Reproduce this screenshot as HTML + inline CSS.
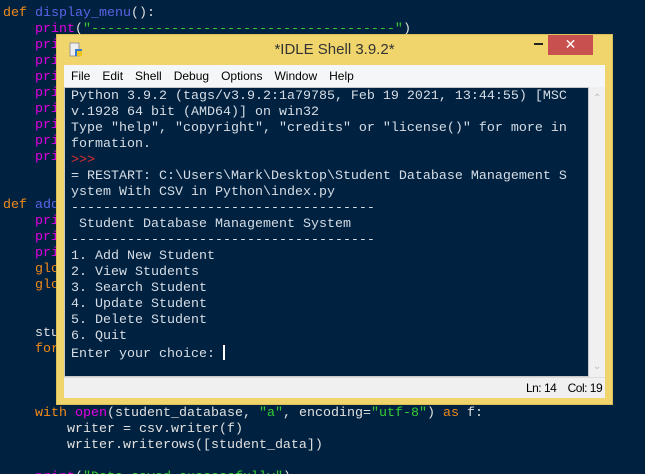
<!DOCTYPE html>
<html style="width:645px;height:474px;overflow:hidden"><head><style>
body{margin:0;width:645px;height:474px;overflow:hidden;background:#002240;position:relative;font-family:"Liberation Mono",monospace;}
.code{position:absolute;left:3px;top:6px;font-size:13.33px;line-height:16px;color:#e0e0e0;white-space:pre;}
.k{color:#f08a18}.f{color:#5b63e8}.p{color:#e200e2}.s{color:#33cc33}
#win{position:absolute;left:56px;top:34px;width:557px;height:371px;background:#efd56c;box-sizing:border-box;border:1px solid #d8bf5a;}
#title{position:absolute;left:0;right:0;top:0;height:30px;font-family:"Liberation Sans",sans-serif;font-size:15px;color:#333;text-align:center;line-height:30px;}
#close{position:absolute;left:491px;top:0;width:45px;height:20px;background:#c8514f;color:#fff;text-align:center;line-height:19px;font-size:14px;font-family:"Liberation Sans",sans-serif;}
#menu{position:absolute;left:7px;top:30px;width:541px;height:22px;background:#f5f6f7;font-family:"Liberation Sans",sans-serif;font-size:12px;line-height:22px;color:#000;}
#menu span{margin-left:7px;margin-right:5px}
#text{position:absolute;left:7px;top:52px;width:525px;height:290px;background:#002240;border:1px solid #c8c8c8;box-sizing:border-box;}
#tt{position:absolute;left:6px;top:1px;font-size:13.33px;line-height:16px;color:#d6dde6;white-space:pre;}
#sb{position:absolute;left:532px;top:52px;width:16px;height:290px;background:#f0f0f0;}
#status{position:absolute;left:7px;top:342px;width:541px;height:21px;background:#f0f0f0;font-family:"Liberation Sans",sans-serif;font-size:12px;line-height:21px;text-align:right;color:#000;border-top:1px solid #ddd;box-sizing:border-box;letter-spacing:-0.5px;}
</style></head><body>
<div class="code"><span class="k">def</span> <span class="f">display_menu</span>():
    <span class="p">print</span>(<span class="s">"--------------------------------------"</span>)
    <span class="p">print</span>
    <span class="p">print</span>
    <span class="p">print</span>
    <span class="p">print</span>
    <span class="p">print</span>
    <span class="p">print</span>
    <span class="p">print</span>
    <span class="p">print</span>


<span class="k">def</span> <span class="f">add_student</span>():
    <span class="p">print</span>
    <span class="p">print</span>
    <span class="p">print</span>
    <span class="k">global</span>
    <span class="k">global</span>


    student_data
    <span class="k">for</span>



    <span class="k">with</span> <span class="p">open</span>(student_database, <span class="s">"a"</span>, encoding=<span class="s">"utf-8"</span>) <span class="k">as</span> f:
        writer = csv.writer(f)
        writer.writerows([student_data])

    <span class="p">print</span>(<span class="s">"Data saved successfully"</span>)</div>
<div id="win">
<div id="title">*IDLE Shell 3.9.2*</div>
<svg style="position:absolute;left:11px;top:7px" width="16" height="16"><rect x="2" y="1" width="9" height="13" fill="#eee" stroke="#999"/><rect x="7" y="7" width="7" height="7" fill="#3d7cc9"/><rect x="9" y="9" width="5" height="5" fill="#f2c418"/></svg>
<div style="position:absolute;left:477px;top:8px;width:9px;height:2px;background:#222"></div>
<div style="position:absolute;left:510px;top:5px;width:11px;height:8px;border:1px solid #222;border-top-width:2px"></div>
<div id="close">✕</div>
<div id="menu"><span>File</span><span>Edit</span><span>Shell</span><span>Debug</span><span>Options</span><span>Window</span><span>Help</span></div>
<div id="text"><div id="tt">Python 3.9.2 (tags/v3.9.2:1a79785, Feb 19 2021, 13:44:55) [MSC
v.1928 64 bit (AMD64)] on win32
Type "help", "copyright", "credits" or "license()" for more in
formation.
<span style="color:#e03030">&gt;&gt;&gt;</span>
= RESTART: C:\Users\Mark\Desktop\Student Database Management S
ystem With CSV in Python\index.py
--------------------------------------
 Student Database Management System
--------------------------------------
1. Add New Student
2. View Students
3. Search Student
4. Update Student
5. Delete Student
6. Quit
Enter your choice: <span style="display:inline-block;width:2px;height:15px;background:#fff;vertical-align:-3px"></span></div></div>
<div id="sb"><div style="position:absolute;left:4px;top:6px;color:#bbb;font-size:10px">⌃</div><div style="position:absolute;left:4px;bottom:4px;color:#bbb;font-size:10px">⌄</div></div>
<div id="status">Ln: 14&nbsp;&nbsp;&nbsp; Col: 19&nbsp;</div>
</div>
</body></html>
